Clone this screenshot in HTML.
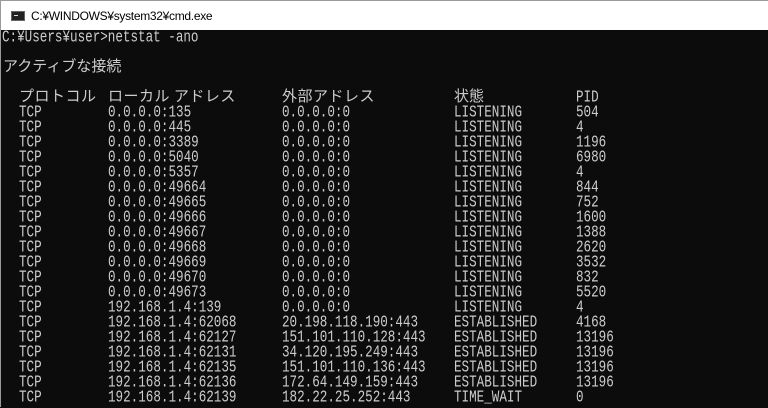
<!DOCTYPE html>
<html><head><meta charset="utf-8"><style>
*{margin:0;padding:0;box-sizing:border-box}
body{width:768px;height:407px;overflow:hidden;background:#0c0c0c;position:relative;font-family:"Liberation Mono","Noto Sans CJK JP",monospace;color:#cccccc}
#tb{position:absolute;left:0;top:0;width:768px;height:30px;background:#fff;border-top:1px solid #9a9a9a;border-left:1px solid #9a9a9a}
#tb .t{position:absolute;left:30px;top:8px;font:12px "Liberation Sans",sans-serif;color:#000;letter-spacing:-0.3px}
#ic{position:absolute;left:10px;top:10px;width:14px;height:10px;background:#222;border:1px solid #666}
#ic:before{content:"";position:absolute;left:2px;top:3px;width:4px;height:1px;background:#ddd}
#con{position:absolute;left:0;top:30px;width:768px;height:377px;border-left:1px solid #9a9a9a}
.r{position:absolute;height:15px;left:0;width:768px}
.r span{position:absolute;top:0;font-size:12.6px;line-height:15px;white-space:pre;display:inline-block;transform:scaleY(1.3);transform-origin:50% 55%}
.r span.j{font-family:"Noto Sans CJK JP",sans-serif;font-size:15px;line-height:15px;transform:none;top:-3px;letter-spacing:0px}
</style></head><body>
<div id="tb"><div id="ic"></div><div class="t">C:¥WINDOWS¥system32¥cmd.exe</div></div>
<div id="con">
<div class="r" style="top:1px"><span style="left:1px">C:¥Users¥user&gt;netstat -ano</span></div>
<div class="r" style="top:31px"><span class="j" style="left:2px">アクティブな接続</span></div>
<div class="r" style="top:61px"><span class="j" style="left:18px;letter-spacing:0.5px">プロトコル</span><span class="j" style="left:107px;letter-spacing:0.5px">ローカル アドレス</span><span class="j" style="left:281px;letter-spacing:0.5px">外部アドレス</span><span class="j" style="left:453px">状態</span><span style="left:575px">PID</span></div>
<div id="rows"></div>
</div>
<script>
var d=[
["0.0.0.0:135","0.0.0.0:0","LISTENING","504"],
["0.0.0.0:445","0.0.0.0:0","LISTENING","4"],
["0.0.0.0:3389","0.0.0.0:0","LISTENING","1196"],
["0.0.0.0:5040","0.0.0.0:0","LISTENING","6980"],
["0.0.0.0:5357","0.0.0.0:0","LISTENING","4"],
["0.0.0.0:49664","0.0.0.0:0","LISTENING","844"],
["0.0.0.0:49665","0.0.0.0:0","LISTENING","752"],
["0.0.0.0:49666","0.0.0.0:0","LISTENING","1600"],
["0.0.0.0:49667","0.0.0.0:0","LISTENING","1388"],
["0.0.0.0:49668","0.0.0.0:0","LISTENING","2620"],
["0.0.0.0:49669","0.0.0.0:0","LISTENING","3532"],
["0.0.0.0:49670","0.0.0.0:0","LISTENING","832"],
["0.0.0.0:49673","0.0.0.0:0","LISTENING","5520"],
["192.168.1.4:139","0.0.0.0:0","LISTENING","4"],
["192.168.1.4:62068","20.198.118.190:443","ESTABLISHED","4168"],
["192.168.1.4:62127","151.101.110.128:443","ESTABLISHED","13196"],
["192.168.1.4:62131","34.120.195.249:443","ESTABLISHED","13196"],
["192.168.1.4:62135","151.101.110.136:443","ESTABLISHED","13196"],
["192.168.1.4:62136","172.64.149.159:443","ESTABLISHED","13196"],
["192.168.1.4:62139","182.22.25.252:443","TIME_WAIT","0"]];
var h="";
d.forEach(function(r,i){h+='<div class="r" style="top:'+(76+i*15)+'px"><span style="left:18px">TCP</span><span style="left:107px">'+r[0]+'</span><span style="left:281px">'+r[1]+'</span><span style="left:453px">'+r[2]+'</span><span style="left:575px">'+r[3]+'</span></div>';});
document.getElementById("rows").innerHTML=h;
</script>
</body></html>
